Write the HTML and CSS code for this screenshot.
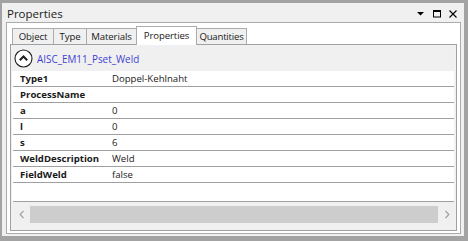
FILE: index.html
```html
<!DOCTYPE html>
<html>
<head>
<meta charset="utf-8">
<link rel="stylesheet" href="styles.css">
</head>
<body>
<div class="window">
  <div class="titlebar">
    <span class="title">Properties</span>
    <div class="controls">
      <svg width="8" height="4" viewBox="0 0 8 4"><path d="M0 0H7L3.5 3.5Z" fill="#000"/></svg>
      <svg width="8" height="8" viewBox="0 0 8 8"><rect x="0.5" y="0.5" width="7" height="6.5" fill="none" stroke="#000"/><rect x="0.5" y="0.5" width="7" height="1.5" fill="#000"/></svg>
      <svg width="8" height="8" viewBox="0 0 8 8"><path d="M0.5 0.5L7.5 7.5M7.5 0.5L0.5 7.5" stroke="#000" stroke-width="1.1"/></svg>
    </div>
  </div>
  <div class="frame">
    <div class="tabs">
      <div class="tab t-object">Object</div>
      <div class="tab t-type">Type</div>
      <div class="tab t-materials">Materials</div>
      <div class="tab t-properties active">Properties</div>
      <div class="tab t-quantities">Quantities</div>
    </div>
    <div class="panel">
      <div class="grid">
        <div class="group">
          <svg class="collapse" width="19" height="19" viewBox="0 0 19 19"><circle cx="9.5" cy="9.5" r="8.5" fill="#fff" stroke="#1e1e1e" stroke-width="1.1"/><path d="M5.8 11.2L9.5 7.5L13.2 11.2" fill="none" stroke="#1e1e1e" stroke-width="2"/></svg>
          <span class="group-name">AISC_EM11_Pset_Weld</span>
        </div>
        <div class="row"><span class="k">Type1</span><span class="v">Doppel-Kehlnaht</span></div>
        <div class="row"><span class="k">ProcessName</span><span class="v"></span></div>
        <div class="row"><span class="k">a</span><span class="v">0</span></div>
        <div class="row"><span class="k">l</span><span class="v">0</span></div>
        <div class="row"><span class="k">s</span><span class="v">6</span></div>
        <div class="row"><span class="k">WeldDescription</span><span class="v">Weld</span></div>
        <div class="row"><span class="k">FieldWeld</span><span class="v">false</span></div>
        <div class="filler"></div>
        <div class="hscroll">
          <svg class="arrow" width="6" height="9" viewBox="0 0 6 9"><path d="M4.5 0.8L1.2 4.5L4.5 8.2" fill="none" stroke="#a0a0a0" stroke-width="1.2"/></svg>
          <div class="track"></div>
          <svg class="arrow" width="6" height="9" viewBox="0 0 6 9"><path d="M1.5 0.8L4.8 4.5L1.5 8.2" fill="none" stroke="#a0a0a0" stroke-width="1.2"/></svg>
        </div>
      </div>
    </div>
  </div>
</div>
</body>
</html>
```
FILE: styles.css
```css
* { box-sizing: border-box; }
html, body { margin: 0; padding: 0; }
body {
  width: 468px;
  height: 241px;
  background: #a3a3a3;
  font-family: "Open Sans", "Noto Sans", sans-serif;
  overflow: hidden;
}
.window {
  margin: 3px 4px 5px 2px;
  height: 233px;
  background: #f0f0f0;
  display: flex;
  flex-direction: column;
}
.titlebar {
  height: 19px;
  display: flex;
  align-items: center;
  justify-content: space-between;
  padding: 0 7px 0 5px;
}
.title {
  font-size: 11.5px;
  color: #1a1a1a;
  line-height: 19px;
  padding-top: 2px;
}
.controls {
  display: flex;
  align-items: center;
  gap: 8px;
  padding-top: 2px;
}
.frame {
  margin: 0 3px 2px 4px;
  height: 212px;
  border: 1px solid #ababab;
  background: #fff;
  padding: 3px 3px 2px 3px;
  display: flex;
  flex-direction: column;
}
.tabs {
  display: flex;
  align-items: flex-end;
  height: 18px;
  padding-left: 2px;
  position: relative;
  z-index: 1;
}
.tab {
  height: 16px;
  border: 1px solid #acacac;
  border-bottom: none;
  border-right: none;
  background: #f0f0f0;
  font-size: 9.6px;
  line-height: 15px;
  color: #1a1a1a;
  text-align: center;
  white-space: nowrap;
  letter-spacing: -0.1px;
}
.t-object { width: 41px; }
.t-type { width: 33px; }
.t-materials { width: 50px; }
.t-properties { width: 61px; }
.t-quantities { width: 50px; border-right: 1px solid #acacac; letter-spacing: -0.2px; }
.tab.active {
  height: 19px;
  margin-bottom: -1px;
  background: #fff;
  border-right: 1px solid #acacac;
  padding-top: 1px;
  line-height: 15px;
}
.tab.active + .tab { border-left: none; }
.panel {
  height: 187px;
  border: 1px solid #a0a0a0;
  background: #eef2f6;
  padding: 1px 2px 0 1px;
}
.grid {
  height: 184px;
  display: flex;
  flex-direction: column;
  background: #fff;
}
.group {
  height: 25px;
  flex-shrink: 0;
  background: #f0f0f0;
  display: flex;
  align-items: center;
  padding-left: 2px;
}
.collapse { display: block; }
.group-name {
  margin-left: 4px;
  font-size: 9.9px;
  color: #3f3fd0;
  line-height: 14px;
  padding-top: 1px;
}
.row {
  height: 16px;
  flex-shrink: 0;
  border-bottom: 1px solid #a0a0a0;
  display: flex;
  align-items: center;
  font-size: 9.6px;
  color: #1a1a1a;
  margin-left: 1px;
}
.k {
  width: 99px;
  padding-left: 7px;
  font-weight: bold;
}
.v { flex: 1; }
.filler {
  height: 19px;
  flex-shrink: 0;
  border-bottom: 1px solid #a0a0a0;
  margin-left: 1px;
}
.hscroll {
  flex: 1;
  background: #f0f0f0;
  display: flex;
  align-items: center;
  padding: 0 4px 3px 7px;
}
.arrow { display: block; }
.track {
  flex: 1;
  height: 17px;
  background: #cdcdcd;
  margin: 0 6px 0 5px;
}
```
